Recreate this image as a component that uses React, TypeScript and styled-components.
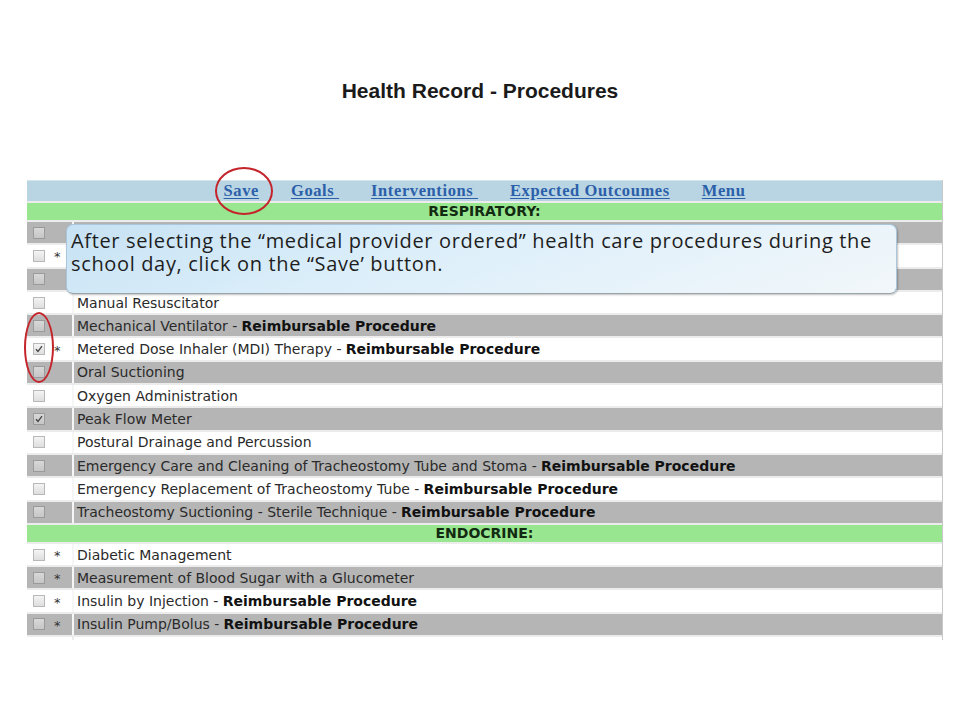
import React from 'react';
import styled, { createGlobalStyle } from 'styled-components';

const GlobalStyle = createGlobalStyle`
  html, body {
    margin: 0;
    padding: 0;
    background: #ffffff;
  }
  body {
    font-family: "DejaVu Sans", Verdana, sans-serif;
  }
`;

type Procedure = {
  label: string;
  reimb?: boolean;
  star?: boolean;
  checked?: boolean;
};

const RESPIRATORY: Procedure[] = [
  { label: '' },
  { label: '', star: true },
  { label: '' },
  { label: 'Manual Resuscitator' },
  { label: 'Mechanical Ventilator', reimb: true },
  { label: 'Metered Dose Inhaler (MDI) Therapy', reimb: true, star: true, checked: true },
  { label: 'Oral Suctioning' },
  { label: 'Oxygen Administration' },
  { label: 'Peak Flow Meter', checked: true },
  { label: 'Postural Drainage and Percussion' },
  { label: 'Emergency Care and Cleaning of Tracheostomy Tube and Stoma', reimb: true },
  { label: 'Emergency Replacement of Tracheostomy Tube', reimb: true },
  { label: 'Tracheostomy Suctioning - Sterile Technique', reimb: true },
];

const ENDOCRINE: Procedure[] = [
  { label: 'Diabetic Management', star: true },
  { label: 'Measurement of Blood Sugar with a Glucometer', star: true },
  { label: 'Insulin by Injection', reimb: true, star: true },
  { label: 'Insulin Pump/Bolus', reimb: true, star: true },
];

const NAV_LINKS = ['Save', 'Goals\u00a0', 'Interventions\u00a0', 'Expected Outcoumes', 'Menu'];

const Page = styled.div`
  width: 960px;
  height: 720px;
  overflow: hidden;
  padding-top: 78px;
  box-sizing: border-box;
`;

const Title = styled.h1`
  margin: 0;
  text-align: center;
  font-family: "Liberation Sans", Arial, sans-serif;
  font-weight: bold;
  font-size: 21px;
  line-height: 26px;
  color: #1a1a1a;
`;

const Sheet = styled.div`
  position: relative;
  margin: 76px 0 0 27px;
  width: 915px;
  background: #ececec;
  border-right: 1px solid #c8c8c8;
  display: flex;
  flex-direction: column;
  gap: 2px;
`;

const NavBar = styled.nav`
  height: 20px;
  background: #b9d5e4;
  border-top: 1px solid #d6e4ec;
  display: flex;
  justify-content: center;
  align-items: center;
  gap: 32px;
`;

const NavLink = styled.a`
  font-family: "Liberation Serif", "Times New Roman", serif;
  font-weight: bold;
  font-size: 16.5px;
  letter-spacing: 0.6px;
  color: #2c5fa9;
  text-decoration: underline;
  text-underline-offset: 2px;
  cursor: pointer;
`;

const SectionHeader = styled.div`
  height: 17px;
  background: #98e68f;
  text-align: center;
  font-weight: bold;
  font-size: 14px;
  line-height: 17px;
  color: #132a12;
`;

const Row = styled.div<{ $shade: boolean }>`
  display: grid;
  grid-template-columns: 45px 1fr;
  column-gap: 2px;
  height: 21.3px;
  background: #f6f6f6;

  & > div {
    background: ${(p) => (p.$shade ? '#b5b5b5' : '#ffffff')};
  }
`;

const StubRow = styled.div`
  height: 3px;
  display: grid;
  grid-template-columns: 45px 1fr;
  column-gap: 2px;

  & > div {
    background: #ffffff;
  }
`;

const CheckCell = styled.div`
  display: flex;
  align-items: center;
  padding-left: 6px;
  gap: 9px;
`;

const Box = styled.span<{ $shade: boolean }>`
  width: 10px;
  height: 10px;
  border: 1px solid ${(p) => (p.$shade ? '#9a9a9a' : '#b8b8b8')};
  background: ${(p) => (p.$shade ? 'linear-gradient(#d8d8d8, #c6c6c6)' : 'linear-gradient(#f4f4f4, #dedede)')};
  display: flex;
  align-items: center;
  justify-content: center;
`;

const Star = styled.span`
  font-size: 13px;
  line-height: 1;
  color: #333;
  margin-top: 2px;
`;

const LabelCell = styled.div`
  display: flex;
  align-items: center;
  padding-left: 3px;
  font-size: 14px;
  color: #2a2a2a;
  white-space: nowrap;

  b {
    color: #111;
    margin-left: 0.3em;
  }
`;

const Callout = styled.div`
  position: absolute;
  left: 39px;
  top: 44px;
  width: 831px;
  height: 70px;
  box-sizing: border-box;
  padding: 4px 4px;
  border-radius: 7px;
  border: 1px solid #a9c6dc;
  border-bottom-color: #9aa4ab;
  background: linear-gradient(160deg, #c7e2f4 0%, #dbeefa 40%, #f2f7fa 100%);
  box-shadow: 1px 1px 2px rgba(0, 0, 0, 0.25);
  font-family: "Open Sans", "Noto Sans", sans-serif;
  font-size: 20px;
  line-height: 23px;
  color: #1e1e1e;
  letter-spacing: 0.65px;
`;

const Ring = styled.span<{ $x: number; $y: number; $w: number; $h: number }>`
  position: absolute;
  left: ${(p) => p.$x}px;
  top: ${(p) => p.$y}px;
  width: ${(p) => p.$w}px;
  height: ${(p) => p.$h}px;
  border: 2px solid #c4242b;
  border-radius: 50%;
  box-sizing: border-box;
  pointer-events: none;
`;

function Tick() {
  return (
    <svg width="8" height="8" viewBox="0 0 8 8">
      <path d="M1 4.2 L3 6.4 L7 1.2" fill="none" stroke="#444" strokeWidth="1.3" />
    </svg>
  );
}

function ProcedureRow({ item, shade }: { item: Procedure; shade: boolean }) {
  return (
    <Row $shade={shade}>
      <CheckCell>
        <Box $shade={shade}>{item.checked && <Tick />}</Box>
        {item.star && <Star>*</Star>}
      </CheckCell>
      <LabelCell>
        {item.label}
        {item.reimb && (
          <>
            &nbsp;-<b>Reimbursable Procedure</b>
          </>
        )}
      </LabelCell>
    </Row>
  );
}

export default function App() {
  return (
    <Page>
      <GlobalStyle />
      <Title>Health Record - Procedures</Title>
      <Sheet>
        <NavBar>
          {NAV_LINKS.map((l) => (
            <NavLink key={l}>{l}</NavLink>
          ))}
        </NavBar>
        <SectionHeader>RESPIRATORY:</SectionHeader>
        {RESPIRATORY.map((p, i) => (
          <ProcedureRow key={`r${i}`} item={p} shade={i % 2 === 0} />
        ))}
        <SectionHeader>ENDOCRINE:</SectionHeader>
        {ENDOCRINE.map((p, i) => (
          <ProcedureRow key={`e${i}`} item={p} shade={i % 2 === 1} />
        ))}
        <StubRow>
          <div />
          <div />
        </StubRow>
        <Callout>
          After selecting the “medical provider ordered” health care procedures during the school day, click on the “Save’ button.
        </Callout>
        <Ring $x={188} $y={-13} $w={58} $h={48} />
        <Ring $x={-3} $y={132} $w={30} $h={71} />
      </Sheet>
    </Page>
  );
}
